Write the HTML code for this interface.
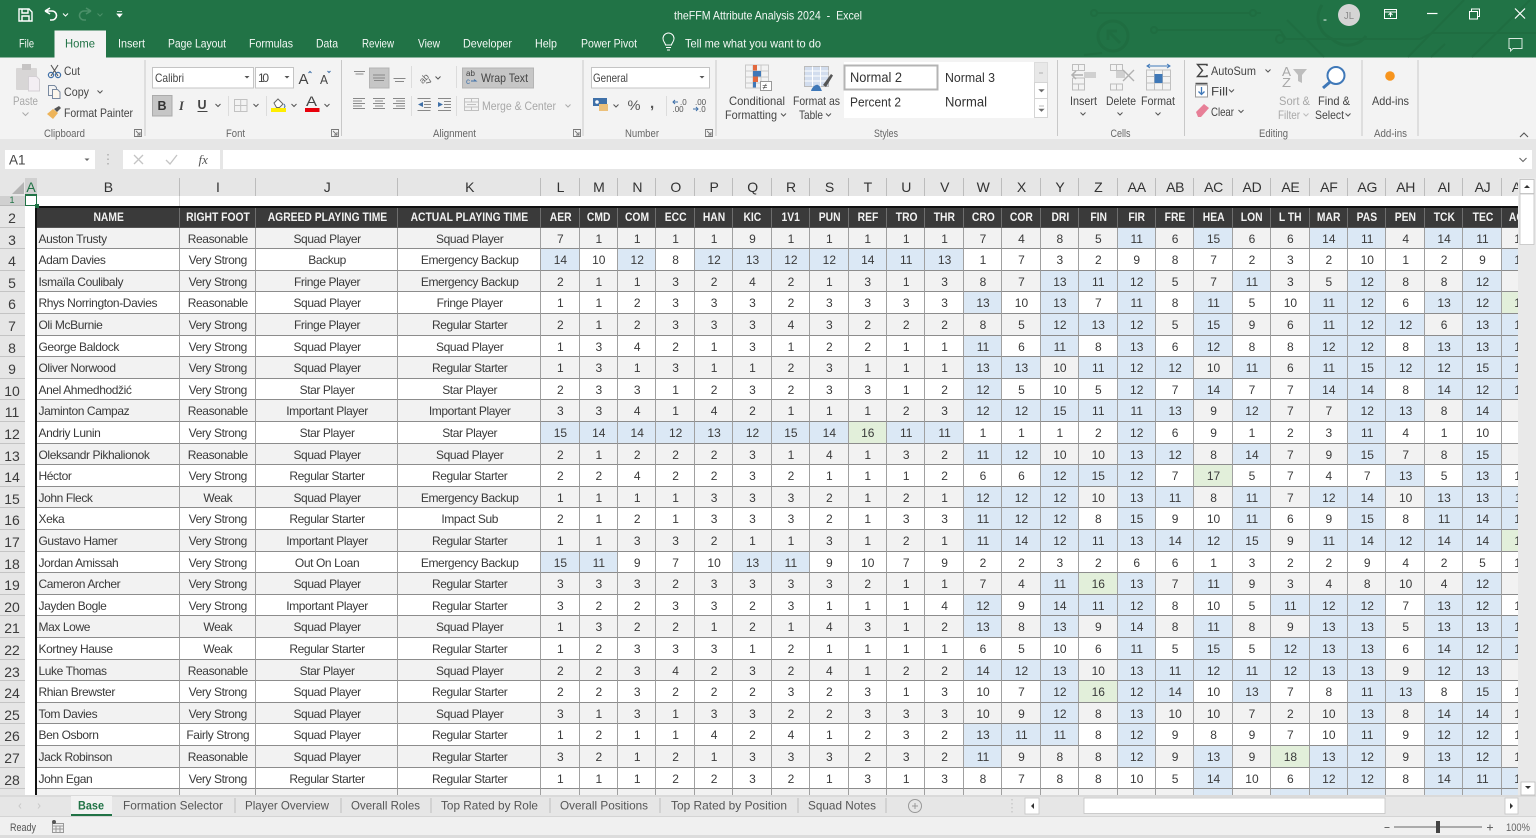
<!DOCTYPE html>
<html lang="en"><head><meta charset="utf-8"><title>theFFM Attribute Analysis 2024 - Excel</title>
<style>
*{box-sizing:border-box}
html,body{margin:0;padding:0;width:1536px;height:838px;overflow:hidden;background:#e6e6e6;font-family:"Liberation Sans",sans-serif}
body{filter:blur(.35px)}
svg#c{position:absolute;left:0;top:0}
svg text{font-family:"Liberation Sans",sans-serif;font-size:12px;fill:#444}
.w{fill:#f4f8f5}.gr{fill:#a8a8a8}.lb{font-size:11px;fill:#666}
#g{position:absolute;left:37px;top:205.7px;width:1480.7px;height:589.3px;overflow:hidden;font-size:12px;color:#3a3a3a}
#g p{margin:0;display:flex;height:21.6px;background:#fff}
#g p:nth-child(even){background:#f2f2f2}
#g p>*{display:block;flex:none;width:38.43px;height:100%;text-align:center;line-height:22px;padding-left:1px;font-style:normal;text-decoration:none;border-right:1px solid #a0a0a0;border-bottom:1px solid #8c8c8c;white-space:nowrap;overflow:hidden}
#g p>:nth-child(1){width:142.6px;text-align:left;padding-left:1.5px;letter-spacing:-.4px}
#g p>:nth-child(2){width:76.4px;letter-spacing:-.4px}
#g p>:nth-child(3){width:142.2px;letter-spacing:-.4px}
#g p>:nth-child(4){width:143px;letter-spacing:-.4px}
#g u{background:#dbe8f5}
#g s{background:#e2efda}
#g p.h{height:22px;background:#3a3a3a;border-top:2px solid #111;color:#f2f2f2;font-weight:bold}
#g p.h>*{line-height:19px;border-right:1px solid #6e6e6e;border-bottom:1px solid #555;letter-spacing:0!important;text-align:center!important;padding-left:1px!important}
#g em{display:inline-block;font-style:normal;transform:scaleX(.86)}
#ch{position:absolute;left:37px;top:178px;width:1481px;height:17.5px;display:flex;overflow:hidden;font-size:14px;color:#333;text-align:center;line-height:18px;letter-spacing:-.3px}
#ch b{font-weight:normal;flex:none;width:38.43px;height:100%;border-right:1px solid #bcbcbc;padding-left:1px}
#ch b:nth-child(1){width:142.6px}#ch b:nth-child(2){width:76.4px}#ch b:nth-child(3){width:142.2px}#ch b:nth-child(4){width:143px}
#rh{position:absolute;left:0;top:195.5px;width:25px;height:599.5px;overflow:hidden;font-size:14px;color:#3c3c3c;text-align:center}
#rh b{display:block;font-weight:normal;height:21.6px;line-height:25px;border-bottom:1px solid #c4c4c4;padding-right:1px}
#rh b.a{height:10.2px;line-height:9px;font-size:9px;color:#217346;background:#d0d0d0;border-bottom:1px solid #bbb}
#rh b.b{height:22px;line-height:24px}
#r1{position:absolute;left:25px;top:195.5px;width:1493px;height:10.5px;background:#fff}
#ca{position:absolute;left:25px;top:206px;width:12px;height:589px;background:#fff}
#tk{position:absolute;left:35.4px;top:205.7px;width:1.8px;height:589.3px;background:#111}
#sel{position:absolute;left:25px;top:195.2px;width:12px;height:11px;border:1.5px solid #217346;background:#fff}
#hd{position:absolute;left:34.5px;top:204px;width:4px;height:4px;background:#217346}
#lin{position:absolute;left:179.2px;top:195.5px;width:1px;height:10.5px;background:#d6d6d6}
</style></head><body>
<svg id="c" width="1536" height="838" viewBox="0 0 1536 838" xmlns="http://www.w3.org/2000/svg">
<rect width="1536" height="57.5" fill="#217346"/>
<rect y="57.5" width="1536" height="81.5" fill="#f3f3f3"/>
<rect y="139" width="1536" height="56" fill="#e6e6e6"/>
<rect y="795" width="1536" height="43" fill="#e6e6e6"/>
<rect y="817" width="1536" height="18" fill="#f0f0f0"/>
<rect y="816" width="1536" height="1" fill="#d4d4d4"/>
<rect y="835" width="1536" height="3" fill="#dcdcdc"/>
<!-- circuit -->
<g fill="none" stroke="#1f6d41" stroke-width="2">
<path d="M1097 13H1250M1256 13l5 0M1157 30H1280l6 9H1420l12-6H1536M1287 20l37 37M1084 55l18-2M1464 0l-56 57M1530 0l-58 57M1445 44l-14 13"/>
<circle cx="1094" cy="13" r="3"/><circle cx="1253" cy="13" r="3"/><circle cx="1154" cy="30" r="3"/><circle cx="1280" cy="39" r="4"/>
<circle cx="1113" cy="36" r="15" stroke-width="3"/><path d="M1120 43l-12-12M1108 40v-9h9" stroke-width="3"/>
<path d="M1322 5a23 23 0 0 0 10 34a23 23 0 0 0 34-3" stroke-width="3"/>
</g>
<!-- QAT -->
<path d="M19 9h10l3 3v9H19zM22 9v4h6V9M22 21v-5h7v5" fill="none" stroke="#fff" stroke-width="1.4"/>
<path d="M45 11l5-3M45 11l5 3M45 11h7a4.5 4.5 0 0 1 0 9h-2" fill="none" stroke="#fff" stroke-width="1.6"/>
<path d="M63 13.5l2.5 2.5 2.5-2.5" fill="none" stroke="#fff"/>
<path d="M91 11l-5-3M91 11l-5 3M91 11h-7a4.5 4.5 0 0 0 0 9h2" fill="none" stroke="#4b9069" stroke-width="1.6"/>
<path d="M97.500 13.500l2.500 2.500 2.500-2.500" fill="none" stroke="#4b9069"/>
<path d="M117 11.500h5M117 14h5l-2.500 3z" fill="#fff" stroke="#fff" stroke-width=".8"/>
<text class="w" x="674" y="19.500" textLength="188" lengthAdjust="spacingAndGlyphs" xml:space="preserve">theFFM Attribute Analysis 2024  -  Excel</text>
<text class="w" x="1323" y="23" font-size="8">-</text>
<circle cx="1349" cy="15" r="11" fill="#d4d4d4"/>
<text x="1344" y="19" textLength="10" lengthAdjust="spacingAndGlyphs" style="font-size:10px;fill:#8a8a8a">JL</text>
<path d="M1384.500 9.500h12v9h-12zM1384.500 12h12M1390.500 17v-4M1388.500 15l2-2 2 2" fill="none" stroke="#fff"/>
<path d="M1427 13.500h10.500" stroke="#fff" stroke-width="1.2"/>
<path d="M1469.500 11.500h8v7.500h-8zM1471.500 11.500v-2.500h8v7.500h-2" fill="none" stroke="#fff"/>
<path d="M1515 8.500l10 10M1525 8.500l-10 10" stroke="#fff" stroke-width="1.2"/>
<path d="M1509 38.500h13v10h-9l-2.500 2.500v-2.500H1509z" fill="none" stroke="#d8e8de"/>
<!-- tabs -->
<rect x="54.500" y="30.500" width="51.500" height="27.500" fill="#f3f3f3"/>
<g>
<text class="w" x="19" y="47.500" textLength="15" lengthAdjust="spacingAndGlyphs">File</text>
<text x="65" y="47.500" textLength="30" lengthAdjust="spacingAndGlyphs" style="fill:#217346">Home</text>
<text class="w" x="118" y="47.500" textLength="27" lengthAdjust="spacingAndGlyphs">Insert</text>
<text class="w" x="168" y="47.500" textLength="58" lengthAdjust="spacingAndGlyphs">Page Layout</text>
<text class="w" x="249" y="47.500" textLength="44" lengthAdjust="spacingAndGlyphs">Formulas</text>
<text class="w" x="316" y="47.500" textLength="22" lengthAdjust="spacingAndGlyphs">Data</text>
<text class="w" x="362" y="47.500" textLength="32" lengthAdjust="spacingAndGlyphs">Review</text>
<text class="w" x="418" y="47.500" textLength="22" lengthAdjust="spacingAndGlyphs">View</text>
<text class="w" x="463" y="47.500" textLength="49" lengthAdjust="spacingAndGlyphs">Developer</text>
<text class="w" x="535" y="47.500" textLength="22" lengthAdjust="spacingAndGlyphs">Help</text>
<text class="w" x="581" y="47.500" textLength="56" lengthAdjust="spacingAndGlyphs">Power Pivot</text>
<text class="w" x="685" y="47.500" textLength="136" lengthAdjust="spacingAndGlyphs">Tell me what you want to do</text>
</g>
<path d="M665.500 45c0-2-2.500-3-2.500-6.500a5.500 5.500 0 0 1 11 0c0 3.500-2.500 4.500-2.500 6.500zM666 47.500h5M667 50h3" fill="none" stroke="#fff"/>
<!-- ribbon separators -->
<path d="M145 60v76M341.500 60v76M583 60v76M716 60v76M1057.500 60v76M1184.500 60v76M1362 60v76M1418 60v76" stroke="#c8c8c8"/>
<g class="labels">
<text class="lb" x="44" y="137" textLength="41" lengthAdjust="spacingAndGlyphs">Clipboard</text>
<text class="lb" x="226" y="137" textLength="19" lengthAdjust="spacingAndGlyphs">Font</text>
<text class="lb" x="433" y="137" textLength="43" lengthAdjust="spacingAndGlyphs">Alignment</text>
<text class="lb" x="625" y="137" textLength="34" lengthAdjust="spacingAndGlyphs">Number</text>
<text class="lb" x="874" y="137" textLength="24" lengthAdjust="spacingAndGlyphs">Styles</text>
<text class="lb" x="1110.500" y="137" textLength="20" lengthAdjust="spacingAndGlyphs">Cells</text>
<text class="lb" x="1259" y="137" textLength="29" lengthAdjust="spacingAndGlyphs">Editing</text>
<text class="lb" x="1374" y="137" textLength="33" lengthAdjust="spacingAndGlyphs">Add-ins</text>
</g>
<path d="M134.500 129.500h7v7h-7zM136 131l4 4M137 135h3v-3M331.500 129.500h7v7h-7zM333 131l4 4M334 135h3v-3M573.500 129.500h7v7h-7zM575 131l4 4M576 135h3v-3M705.500 129.500h7v7h-7zM707 131l4 4M708 135h3v-3" fill="none" stroke="#777" stroke-width=".9"/>
<!-- clipboard -->
<rect x="16" y="68" width="21" height="22" rx="1" fill="#d8d6d6"/><rect x="22" y="64" width="9" height="6" fill="#c6c4c4"/>
<path d="M28.500 76.500h8l3 3v11.500h-11z" fill="#f3eef3" stroke="#d4d0d4"/>
<text class="gr" x="13" y="105" textLength="25" lengthAdjust="spacingAndGlyphs">Paste</text>
<path d="M22.500 112.500l3 3 3-3" fill="none" stroke="#aaa"/>
<path d="M51 65l7 11M58 65l-7 11" stroke="#555" stroke-width="1.100"/><circle cx="51" cy="75" r="2.600" fill="none" stroke="#3f70a8" stroke-width="1.200"/><circle cx="58" cy="75" r="2.600" fill="none" stroke="#3f70a8" stroke-width="1.200"/>
<text x="64" y="75" textLength="16" lengthAdjust="spacingAndGlyphs">Cut</text>
<path d="M48.500 85.500h6l2 2v8h-8z" fill="#f4f4f4" stroke="#7a8aa0"/><path d="M52.500 89.500h5l2.500 2.500v6.500h-7.500z" fill="#fdf7ec" stroke="#7a8aa0"/>
<text x="64" y="96" textLength="25" lengthAdjust="spacingAndGlyphs">Copy</text>
<path d="M97.500 90.500l2.500 2.500 2.500-2.500" fill="none" stroke="#555"/>
<path d="M47 114l6-5 5 4-5 6z" fill="#edb45a"/><path d="M54 109l5-3 2 2-4 4z" fill="#555"/>
<text x="64" y="117" textLength="69" lengthAdjust="spacingAndGlyphs">Format Painter</text>
<!-- font -->
<rect x="152.500" y="67.500" width="101" height="20.500" fill="#fff" stroke="#c4c4c4"/>
<text x="155" y="82" textLength="29" lengthAdjust="spacingAndGlyphs">Calibri</text>
<path d="M244.500 76h5l-2.500 2.500z" fill="#555"/>
<rect x="255.500" y="67.500" width="38" height="20.500" fill="#fff" stroke="#c4c4c4"/>
<text x="258" y="82" textLength="11">10</text>
<path d="M284.500 76h5l-2.500 2.500z" fill="#555"/>
<text x="298.500" y="84" style="font-size:15px" textLength="10" lengthAdjust="spacingAndGlyphs">A</text><path d="M308.500 73l1.500-1.500 1.500 1.500" fill="none" stroke="#3f70a8"/>
<text x="320" y="84" style="font-size:13px" textLength="8" lengthAdjust="spacingAndGlyphs">A</text><path d="M327.500 71l1.500 1.500 1.500-1.500" fill="none" stroke="#3f70a8"/>
<rect x="152.500" y="95.500" width="19.500" height="20.500" fill="#c6c6c6" stroke="#ababab"/>
<text x="157.500" y="110" style="font-size:12.500px;font-weight:bold;fill:#333">B</text>
<text x="179" y="110" style="font-size:12.500px;font-style:italic;font-weight:bold;fill:#444;font-family:'Liberation Serif',serif">I</text>
<text x="197.500" y="109" style="font-size:12.500px;font-weight:bold;fill:#444">U</text><path d="M197.500 111.500h10" stroke="#444"/>
<path d="M215.500 104l2.500 2.500 2.500-2.500M253.500 104l2.500 2.500 2.500-2.500M291.500 104l2.500 2.500 2.500-2.500M324.500 104l2.500 2.500 2.500-2.500" fill="none" stroke="#555"/>
<path d="M234.500 99.500h12.500v12h-12.500zM240.700 99.500v12M234.500 105.500h12.500" fill="none" stroke="#c2c2c2"/>
<path d="M228.500 96v20" stroke="#dcdcdc"/><path d="M266.500 96v20" stroke="#dcdcdc"/>
<rect x="271" y="108" width="15" height="4" fill="#ffee00"/>
<path d="M274 103l4-4 5 5-3.500 3.500h-3z" fill="#fff" stroke="#666"/><path d="M284 104c1 1.500 1.500 3 0 3.500" fill="none" stroke="#3f70a8"/>
<rect x="305" y="108" width="14.500" height="4" fill="#e8000b"/>
<text x="306" y="106" style="font-size:13.500px;fill:#444" textLength="11" lengthAdjust="spacingAndGlyphs">A</text>
<!-- alignment -->
<rect x="369.500" y="68" width="19.500" height="20" fill="#c6c6c6" stroke="#b4b4b4"/>
<path d="M354 71.500h11M355.500 74h8M373 75h12M373 78h12M374 80.500h10M393.500 78.500h12M395 81.500h9" stroke="#888"/>
<path d="M353 98.500h12M353 101h9M353 103.500h12M353 106h9M353 108.500h12M373 98.500h12M375 101h8M373 103.500h12M375 106h8M373 108.500h12M393 98.500h12M396 101h9M393 103.500h12M396 106h9M393 108.500h12M417.500 98.500h13M424 101.500h7M424 104.500h7M424 107.500h7M417.500 110.500h13M438 98.500h13M444 101.500h7M444 104.500h7M444 107.500h7M438 110.500h13" stroke="#888"/>
<path d="M423 102l-5 2.500 5 2.500zM438 102l5 2.500-5 2.500z" fill="#3f70a8"/>
<path d="M411.500 66v22M411.500 96v20M456.500 66v22M456.500 96v20" stroke="#dcdcdc"/>
<text transform="rotate(-45 424 80)" x="420" y="82" style="font-size:9px;fill:#666">ab</text>
<path d="M426 83l5-1M431 82l-2-3" fill="none" stroke="#777"/>
<path d="M435.500 76.500l2.500 2.500 2.500-2.500" fill="none" stroke="#555"/>
<rect x="462.500" y="68" width="71" height="20" fill="#c6c6c6" stroke="#b4b4b4"/>
<text x="466" y="76" style="font-size:8px">ab</text><text x="466" y="84" style="font-size:8px;fill:#3f70a8">c</text><path d="M471 81h5l-2-1.500" fill="none" stroke="#3f70a8"/>
<text x="481" y="82" textLength="47" lengthAdjust="spacingAndGlyphs">Wrap Text</text>
<path d="M464.500 98.500h14v12h-14zM464.500 102h14M464.500 107h14M471.500 98.500v3.500M471.500 107v3.500M467 104.500h9" fill="none" stroke="#c0c0c0"/>
<text class="gr" x="482" y="110" textLength="74" lengthAdjust="spacingAndGlyphs">Merge &amp; Center</text>
<path d="M565.500 104.500l2.500 2.500 2.500-2.500" fill="none" stroke="#aaa"/>
<!-- number -->
<rect x="591.500" y="67.500" width="118" height="20.500" fill="#fff" stroke="#c4c4c4"/>
<text x="593" y="82" textLength="35" lengthAdjust="spacingAndGlyphs">General</text>
<path d="M699.500 76h5l-2.500 2.500z" fill="#555"/>
<rect x="593" y="98" width="14" height="8" fill="#3f70a8"/><rect x="599" y="104" width="9" height="7" fill="#ecc07a"/><circle cx="597" cy="102" r="1.800" fill="#fff"/>
<path d="M613.500 104.500l2.500 2.500 2.500-2.500" fill="none" stroke="#555"/>
<text x="627.500" y="110" style="font-size:14px;fill:#555" textLength="13" lengthAdjust="spacingAndGlyphs">%</text>
<text x="650" y="108" style="font-size:15px;font-weight:bold;fill:#555">,</text>
<path d="M666.500 96v20" stroke="#dcdcdc"/>
<text x="680" y="105" style="font-size:8px;fill:#555">.0</text><text x="672.500" y="112" style="font-size:8px;fill:#555">.00</text><path d="M678 102h-5M675 100l-2 2 2 2" fill="none" stroke="#3f70a8"/>
<text x="695" y="105" style="font-size:8px;fill:#555">.00</text><text x="699" y="112" style="font-size:8px;fill:#555">.0</text><path d="M693 109h5M696 107l2 2-2 2" fill="none" stroke="#3f70a8"/>
<!-- styles -->
<path d="M745.500 65h23v23h-23zM745.500 71h23M745.500 77h23M745.500 83h23M753 65v23M761 65v23" fill="none" stroke="#c8c8c8"/>
<rect x="753" y="65" width="4" height="5.500" fill="#e2683d"/><rect x="753" y="71" width="8" height="5.500" fill="#3f78b8"/><rect x="753" y="76.500" width="5" height="5.500" fill="#e2683d"/><rect x="753" y="82" width="3" height="5.500" fill="#3f78b8"/>
<rect x="760.500" y="81.500" width="11" height="9" fill="#fff" stroke="#999"/>
<text x="762.500" y="89.500" style="font-size:9px">≠</text>
<text x="729" y="105" textLength="56" lengthAdjust="spacingAndGlyphs">Conditional</text>
<text x="725" y="119" textLength="52" lengthAdjust="spacingAndGlyphs">Formatting</text>
<path d="M781 113.500l2.500 2.500 2.500-2.500" fill="none" stroke="#555"/>
<rect x="804.500" y="66.500" width="24" height="20" fill="#d2ddee" stroke="#bbb"/><path d="M804.500 71h24M804.500 76h24M804.500 81h24M812.500 66.500v20M820.500 66.500v20" stroke="#fff"/>
<path d="M823 85l8-11 2 1.500-7 11.500z" fill="#555"/><path d="M811 91c1-4 5-7 7-6s3 4 4 6z" fill="#3f78b8"/>
<text x="793" y="105" textLength="47" lengthAdjust="spacingAndGlyphs">Format as</text>
<text x="799" y="119" textLength="24" lengthAdjust="spacingAndGlyphs">Table</text>
<path d="M826 113.500l2.500 2.500 2.500-2.500" fill="none" stroke="#555"/>
<rect x="844" y="62" width="191" height="56" fill="#fff"/>
<rect x="844.500" y="65.500" width="93" height="24" fill="#fff" stroke="#b4b4b4" stroke-width="2"/>
<text x="850" y="82" style="font-size:14px;fill:#333" textLength="52" lengthAdjust="spacingAndGlyphs">Normal 2</text>
<text x="945" y="82" style="fill:#333;font-size:12.500px" textLength="50" lengthAdjust="spacingAndGlyphs">Normal 3</text>
<text x="850" y="106.500" style="fill:#333;font-size:12.500px" textLength="51" lengthAdjust="spacingAndGlyphs">Percent 2</text>
<text x="945" y="106.500" style="fill:#333;font-size:14px" textLength="42" lengthAdjust="spacingAndGlyphs">Normal</text>
<rect x="1034.500" y="62.500" width="13" height="20" fill="#e8e8e8" stroke="#dcdcdc"/><rect x="1034.500" y="82.500" width="13" height="16" fill="#fff" stroke="#d4d4d4"/><rect x="1034.500" y="98.500" width="13" height="19" fill="#fff" stroke="#d4d4d4"/>
<path d="M1039 73h4M1039 89.500h5l-2.500 2.500zM1039 106h5M1039 109h5l-2.500 2.500z" fill="#666" stroke="#777" stroke-width=".6"/>
<!-- cells -->
<path d="M1072.500 64.500h12v6h-12zM1078.500 64.500v6M1072.500 84h12v6h-12zM1078.500 84v6M1072.500 78h12M1072.500 84v-6M1084.500 84v-6" fill="none" stroke="#bdbdbd"/>
<rect x="1084" y="72" width="12" height="6" fill="#d0d0d0"/><path d="M1083 75h-11M1076 71l-4 4 4 4" fill="none" stroke="#b0b0b0" stroke-width="1.500"/>
<text x="1070" y="105" textLength="27" lengthAdjust="spacingAndGlyphs">Insert</text>
<path d="M1110.500 64.500h12v6h-12zM1116.500 64.500v6M1110.500 84h12v6h-12zM1116.500 84v6" fill="none" stroke="#bdbdbd"/>
<rect x="1116" y="71" width="9" height="7" fill="#d0d0d0"/><path d="M1123 70l11 11M1134 70l-11 11" stroke="#b0b0b0" stroke-width="1.400"/>
<text x="1106" y="105" textLength="30" lengthAdjust="spacingAndGlyphs">Delete</text>
<path d="M1146.500 70h24v20h-24zM1154.500 70v20M1162.500 70v20M1146.500 76.500h24M1146.500 83h24" fill="none" stroke="#c0c0c0"/><rect x="1154.500" y="74" width="8" height="9" fill="#3f78b8"/>
<path d="M1147 66h23M1150 64l-3 2 3 2M1167 64l3 2-3 2" fill="none" stroke="#3f78b8"/>
<text x="1141" y="105" textLength="34" lengthAdjust="spacingAndGlyphs">Format</text>
<path d="M1080.500 112.500l2.500 2.500 2.500-2.500M1117.500 112.500l2.500 2.500 2.500-2.500M1155.500 112.500l2.500 2.500 2.500-2.500" fill="none" stroke="#555"/>
<!-- editing -->
<path d="M1207 66v-1.500h-9.500l5 6-5 6h9.500V75" fill="none" stroke="#444" stroke-width="1.400"/>
<text x="1211" y="75" textLength="45" lengthAdjust="spacingAndGlyphs">AutoSum</text>
<path d="M1265.500 69.500l2.500 2.500 2.500-2.500" fill="none" stroke="#555"/>
<rect x="1195.500" y="85" width="12" height="12" fill="#fff" stroke="#999"/><path d="M1195.500 83.500h12" stroke="#555" stroke-width="1.500"/><path d="M1201.500 87v7M1198.500 91.500l3 3 3-3" fill="none" stroke="#3f78b8" stroke-width="1.300"/>
<text x="1211" y="95.500" textLength="17" lengthAdjust="spacingAndGlyphs">Fill</text>
<path d="M1229 89.500l2.500 2.500 2.500-2.500" fill="none" stroke="#555"/>
<path d="M1196 112l8-8 5 4-8 9h-3z" fill="#e77f97"/>
<text x="1211" y="116" textLength="23" lengthAdjust="spacingAndGlyphs">Clear</text>
<path d="M1238.500 110l2.500 2.500 2.500-2.500" fill="none" stroke="#555"/>
<text class="gr" x="1282" y="76" style="font-size:13px" textLength="9" lengthAdjust="spacingAndGlyphs">A</text>
<text class="gr" x="1282" y="87" style="font-size:13px" textLength="9" lengthAdjust="spacingAndGlyphs">Z</text>
<path d="M1293 69h14l-5 6v8l-4-2v-6z" fill="#bdbdbd"/>
<text class="gr" x="1279" y="105" textLength="31" lengthAdjust="spacingAndGlyphs">Sort &amp;</text>
<text class="gr" x="1278" y="119" textLength="22" lengthAdjust="spacingAndGlyphs">Filter</text>
<path d="M1303.500 113.500l2.500 2.500 2.500-2.500" fill="none" stroke="#bbb"/>
<circle cx="1336" cy="75.500" r="8.500" fill="#fff" stroke="#3f78b8" stroke-width="2"/><path d="M1330 82l-7 6" stroke="#3f78b8" stroke-width="3"/>
<text x="1318" y="105" textLength="32" lengthAdjust="spacingAndGlyphs">Find &amp;</text>
<text x="1315" y="119" textLength="29" lengthAdjust="spacingAndGlyphs">Select</text>
<path d="M1345.500 113.500l2.500 2.500 2.500-2.500" fill="none" stroke="#555"/>
<circle cx="1390" cy="76" r="4.800" fill="#f7941d"/>
<text x="1372" y="105" textLength="37" lengthAdjust="spacingAndGlyphs">Add-ins</text>
<path d="M1520 137l4-4 4 4" fill="none" stroke="#555" stroke-width="1.100"/>
<!-- formula bar -->
<rect x="5" y="150" width="90" height="19" fill="#fff"/>
<text x="9" y="164.500" style="font-size:13.500px;fill:#444">A1</text>
<path d="M84.500 158.500h5l-2.500 2.500z" fill="#666"/>
<path d="M108 154v1.500M108 158.500v1.500M108 163v1.500" stroke="#aaa" stroke-width="1.400"/>
<rect x="123" y="150" width="97" height="19" fill="#fff"/>
<path d="M134 155l9 9M143 155l-9 9" stroke="#c4c4c4" stroke-width="1.300"/>
<path d="M166 160l4 4 7-9" fill="none" stroke="#c4c4c4" stroke-width="1.300"/>
<text x="198.500" y="164" style="font-size:13px;font-style:italic;fill:#555;font-family:'Liberation Serif',serif">fx</text>
<rect x="223" y="150" width="1309" height="19" fill="#fff"/>
<path d="M1519.500 158l3.500 3.500 3.500-3.500" fill="none" stroke="#666" stroke-width="1.100"/>
<!-- corner -->
<path d="M24 182v12H12z" fill="#b4b4b4"/>
<!-- vertical scrollbar -->
<rect x="1518" y="178" width="18" height="618" fill="#e9e9e9"/>
<rect x="1520" y="179.500" width="14" height="14" fill="#fff" stroke="#bbb" stroke-width=".8"/><path d="M1524 188h6l-3-3z" fill="#333"/>
<rect x="1520" y="194" width="14" height="50.500" fill="#fff" stroke="#c4c4c4" stroke-width=".8"/>
<rect x="1521" y="782" width="14" height="13" fill="#fff" stroke="#bbb" stroke-width=".8"/><path d="M1525 786h6l-3 3z" fill="#333"/>
<!-- sheet tabs -->
<rect y="795.500" width="1536" height="1" fill="#cfcfcf"/>
<rect x="71" y="796" width="41" height="20" fill="#f2f2f2"/><rect x="71" y="814" width="41" height="2" fill="#217346"/>
<path d="M21 803.500l-2 2.500 2 2.500M38 803.500l2 2.500-2 2.500" fill="none" stroke="#c8c8c8"/>
<text x="78" y="809.500" textLength="26" lengthAdjust="spacingAndGlyphs" style="font-weight:bold;fill:#217346">Base</text>
<g>
<text x="123" y="809.500" textLength="100" lengthAdjust="spacingAndGlyphs" style="fill:#555">Formation Selector</text>
<text x="245" y="809.500" textLength="84" lengthAdjust="spacingAndGlyphs" style="fill:#555">Player Overview</text>
<text x="351" y="809.500" textLength="69" lengthAdjust="spacingAndGlyphs" style="fill:#555">Overall Roles</text>
<text x="441" y="809.500" textLength="97" lengthAdjust="spacingAndGlyphs" style="fill:#555">Top Rated by Role</text>
<text x="560" y="809.500" textLength="88" lengthAdjust="spacingAndGlyphs" style="fill:#555">Overall Positions</text>
<text x="671" y="809.500" textLength="116" lengthAdjust="spacingAndGlyphs" style="fill:#555">Top Rated by Position</text>
<text x="808" y="809.500" textLength="68" lengthAdjust="spacingAndGlyphs" style="fill:#555">Squad Notes</text>
</g>
<path d="M235 798v15M341 798v15M431 798v15M550 798v15M660 798v15M798 798v15M886 798v15" stroke="#bdbdbd"/>
<circle cx="915" cy="806" r="6.500" fill="none" stroke="#999"/><path d="M912 806h6M915 803v6" stroke="#999"/>
<path d="M1012 799v1.500M1012 803v1.500M1012 807v1.500M1012 811v1.500" stroke="#bbb"/>
<rect x="1025" y="798" width="14" height="16" fill="#fff" stroke="#c4c4c4" stroke-width=".8"/><path d="M1034 803v6l-3-3z" fill="#333"/>
<rect x="1084" y="798" width="301" height="15.500" fill="#fff" stroke="#c4c4c4" stroke-width=".8"/>
<rect x="1505" y="798" width="13" height="16" fill="#fff" stroke="#c4c4c4" stroke-width=".8"/><path d="M1510 803v6l3-3z" fill="#333"/>
<!-- status -->
<text x="10" y="831" textLength="26" lengthAdjust="spacingAndGlyphs" style="font-size:11px;fill:#555">Ready</text>
<path d="M52.500 823.500h11v9h-11zM52.500 826h11M56 826v6.500M60 826v6.500M52.500 829h11" fill="none" stroke="#999"/><circle cx="54" cy="822" r="2" fill="#555"/>
<path d="M1384.500 827.500h5M1394 827h88M1487 827.500h6M1490 824.500v6" stroke="#666"/>
<rect x="1436" y="821" width="4" height="12" fill="#444"/>
<text x="1506" y="831" textLength="24" lengthAdjust="spacingAndGlyphs" style="font-size:11px;fill:#666">100%</text>
</svg>
<div id="r1"></div><div id="ca"></div><div id="lin"></div>
<div id="ch"><b>B</b><b>I</b><b>J</b><b>K</b><b>L</b><b>M</b><b>N</b><b>O</b><b>P</b><b>Q</b><b>R</b><b>S</b><b>T</b><b>U</b><b>V</b><b>W</b><b>X</b><b>Y</b><b>Z</b><b>AA</b><b>AB</b><b>AC</b><b>AD</b><b>AE</b><b>AF</b><b>AG</b><b>AH</b><b>AI</b><b>AJ</b><b>AK</b></div>
<div style="position:absolute;left:25px;top:178px;width:12px;height:17.500px;background:#d0d0d0;color:#217346;font-size:14px;text-align:center;line-height:18px;border-bottom:2px solid #217346">A</div>
<div id="rh"><b class="a">1</b><b class="b">2</b><b>3</b><b>4</b><b>5</b><b>6</b><b>7</b><b>8</b><b>9</b><b>10</b><b>11</b><b>12</b><b>13</b><b>14</b><b>15</b><b>16</b><b>17</b><b>18</b><b>19</b><b>20</b><b>21</b><b>22</b><b>23</b><b>24</b><b>25</b><b>26</b><b>27</b><b>28</b><b></b></div>
<div id="g">
<p class="h"><i><em>NAME</em></i><i><em>RIGHT FOOT</em></i><i><em>AGREED PLAYING TIME</em></i><i><em>ACTUAL PLAYING TIME</em></i><i><em>AER</em></i><i><em>CMD</em></i><i><em>COM</em></i><i><em>ECC</em></i><i><em>HAN</em></i><i><em>KIC</em></i><i><em>1V1</em></i><i><em>PUN</em></i><i><em>REF</em></i><i><em>TRO</em></i><i><em>THR</em></i><i><em>CRO</em></i><i><em>COR</em></i><i><em>DRI</em></i><i><em>FIN</em></i><i><em>FIR</em></i><i><em>FRE</em></i><i><em>HEA</em></i><i><em>LON</em></i><i><em>L TH</em></i><i><em>MAR</em></i><i><em>PAS</em></i><i><em>PEN</em></i><i><em>TCK</em></i><i><em>TEC</em></i><i><em>AGG</em></i></p>
<p><i>Auston Trusty</i><i>Reasonable</i><i>Squad Player</i><i>Squad Player</i><i>7</i><i>1</i><i>1</i><i>1</i><i>1</i><i>9</i><i>1</i><i>1</i><i>1</i><i>1</i><i>1</i><i>7</i><i>4</i><i>8</i><i>5</i><u>11</u><i>6</i><u>15</u><i>6</i><i>6</i><u>14</u><u>11</u><i>4</i><u>14</u><u>11</u><i>10</i></p>
<p><i>Adam Davies</i><i>Very Strong</i><i>Backup</i><i>Emergency Backup</i><u>14</u><i>10</i><u>12</u><i>8</i><u>12</u><u>13</u><u>12</u><u>12</u><u>14</u><u>11</u><u>13</u><i>1</i><i>7</i><i>3</i><i>2</i><i>9</i><i>8</i><i>7</i><i>2</i><i>3</i><i>2</i><i>10</i><i>1</i><i>2</i><i>9</i><u>12</u></p>
<p><i>Ismaïla Coulibaly</i><i>Very Strong</i><i>Fringe Player</i><i>Emergency Backup</i><i>2</i><i>1</i><i>1</i><i>3</i><i>2</i><i>4</i><i>2</i><i>1</i><i>3</i><i>1</i><i>3</i><i>8</i><i>7</i><u>13</u><u>11</u><u>12</u><i>5</i><i>7</i><u>11</u><i>3</i><i>5</i><u>12</u><i>8</i><i>8</i><u>12</u><i></i></p>
<p><i>Rhys Norrington-Davies</i><i>Reasonable</i><i>Squad Player</i><i>Fringe Player</i><i>1</i><i>1</i><i>2</i><i>3</i><i>3</i><i>3</i><i>2</i><i>3</i><i>3</i><i>3</i><i>3</i><u>13</u><i>10</i><u>13</u><i>7</i><u>11</u><i>8</i><u>11</u><i>5</i><i>10</i><u>11</u><u>12</u><i>6</i><u>13</u><u>12</u><s>16</s></p>
<p><i>Oli McBurnie</i><i>Very Strong</i><i>Fringe Player</i><i>Regular Starter</i><i>2</i><i>1</i><i>2</i><i>3</i><i>3</i><i>3</i><i>4</i><i>3</i><i>2</i><i>2</i><i>2</i><i>8</i><i>5</i><u>12</u><u>13</u><u>12</u><i>5</i><u>15</u><i>9</i><i>6</i><u>11</u><u>12</u><u>12</u><i>6</i><u>13</u><u>12</u></p>
<p><i>George Baldock</i><i>Very Strong</i><i>Squad Player</i><i>Squad Player</i><i>1</i><i>3</i><i>4</i><i>2</i><i>1</i><i>3</i><i>1</i><i>2</i><i>2</i><i>1</i><i>1</i><u>11</u><i>6</i><u>11</u><i>8</i><u>13</u><i>6</i><u>12</u><i>8</i><i>8</i><u>12</u><u>12</u><i>8</i><u>13</u><u>13</u><u>12</u></p>
<p><i>Oliver Norwood</i><i>Very Strong</i><i>Squad Player</i><i>Regular Starter</i><i>1</i><i>3</i><i>1</i><i>3</i><i>1</i><i>1</i><i>2</i><i>3</i><i>1</i><i>1</i><i>1</i><u>13</u><u>13</u><i>10</i><u>11</u><u>12</u><u>12</u><i>10</i><u>11</u><i>6</i><u>11</u><u>15</u><u>12</u><u>12</u><u>15</u><u>12</u></p>
<p><i>Anel Ahmedhodžić</i><i>Very Strong</i><i>Star Player</i><i>Star Player</i><i>2</i><i>3</i><i>3</i><i>1</i><i>2</i><i>3</i><i>2</i><i>3</i><i>3</i><i>1</i><i>2</i><u>12</u><i>5</i><i>10</i><i>5</i><u>12</u><i>7</i><u>14</u><i>7</i><i>7</i><u>14</u><u>14</u><i>8</i><u>14</u><u>12</u><u>12</u></p>
<p><i>Jaminton Campaz</i><i>Reasonable</i><i>Important Player</i><i>Important Player</i><i>3</i><i>3</i><i>4</i><i>1</i><i>4</i><i>2</i><i>1</i><i>1</i><i>1</i><i>2</i><i>3</i><u>12</u><u>12</u><u>15</u><u>11</u><u>11</u><u>13</u><i>9</i><u>12</u><i>7</i><i>7</i><u>12</u><u>13</u><i>8</i><u>14</u><i></i></p>
<p><i>Andriy Lunin</i><i>Very Strong</i><i>Star Player</i><i>Star Player</i><u>15</u><u>14</u><u>14</u><u>12</u><u>13</u><u>12</u><u>15</u><u>14</u><s>16</s><u>11</u><u>11</u><i>1</i><i>1</i><i>1</i><i>2</i><u>12</u><i>6</i><i>9</i><i>1</i><i>2</i><i>3</i><u>11</u><i>4</i><i>1</i><i>10</i><i></i></p>
<p><i>Oleksandr Pikhalionok</i><i>Reasonable</i><i>Squad Player</i><i>Squad Player</i><i>2</i><i>1</i><i>2</i><i>2</i><i>2</i><i>3</i><i>1</i><i>4</i><i>1</i><i>3</i><i>2</i><u>11</u><u>12</u><i>10</i><i>10</i><u>13</u><u>12</u><i>8</i><u>14</u><i>7</i><i>9</i><u>15</u><i>7</i><i>8</i><u>15</u><i></i></p>
<p><i>Héctor</i><i>Very Strong</i><i>Regular Starter</i><i>Regular Starter</i><i>2</i><i>2</i><i>4</i><i>2</i><i>2</i><i>3</i><i>2</i><i>1</i><i>1</i><i>1</i><i>2</i><i>6</i><i>6</i><u>12</u><u>15</u><u>12</u><i>7</i><s>17</s><i>5</i><i>7</i><i>4</i><i>7</i><u>13</u><i>5</i><u>13</u><i>10</i></p>
<p><i>John Fleck</i><i>Weak</i><i>Squad Player</i><i>Emergency Backup</i><i>1</i><i>1</i><i>1</i><i>1</i><i>3</i><i>3</i><i>3</i><i>2</i><i>1</i><i>2</i><i>1</i><u>12</u><u>12</u><u>12</u><i>10</i><u>13</u><u>11</u><i>8</i><u>11</u><i>7</i><u>12</u><u>14</u><i>10</i><u>13</u><u>13</u><u>11</u></p>
<p><i>Xeka</i><i>Very Strong</i><i>Regular Starter</i><i>Impact Sub</i><i>2</i><i>1</i><i>2</i><i>1</i><i>3</i><i>3</i><i>3</i><i>2</i><i>1</i><i>3</i><i>3</i><u>11</u><u>12</u><u>12</u><i>8</i><u>15</u><i>9</i><i>10</i><u>11</u><i>6</i><i>9</i><u>15</u><i>8</i><u>11</u><u>14</u><u>12</u></p>
<p><i>Gustavo Hamer</i><i>Very Strong</i><i>Important Player</i><i>Regular Starter</i><i>1</i><i>1</i><i>3</i><i>3</i><i>2</i><i>1</i><i>1</i><i>3</i><i>1</i><i>2</i><i>1</i><u>11</u><u>14</u><u>12</u><u>11</u><u>13</u><u>14</u><u>12</u><u>15</u><i>9</i><u>11</u><u>14</u><u>12</u><u>14</u><u>14</u><s>16</s></p>
<p><i>Jordan Amissah</i><i>Very Strong</i><i>Out On Loan</i><i>Emergency Backup</i><u>15</u><u>11</u><i>9</i><i>7</i><i>10</i><u>13</u><u>11</u><i>9</i><i>10</i><i>7</i><i>9</i><i>2</i><i>2</i><i>3</i><i>2</i><i>6</i><i>6</i><i>1</i><i>3</i><i>2</i><i>2</i><i>9</i><i>4</i><i>2</i><i>5</i><i>10</i></p>
<p><i>Cameron Archer</i><i>Very Strong</i><i>Squad Player</i><i>Regular Starter</i><i>3</i><i>3</i><i>3</i><i>2</i><i>3</i><i>3</i><i>3</i><i>3</i><i>2</i><i>1</i><i>1</i><i>7</i><i>4</i><u>11</u><s>16</s><u>13</u><i>7</i><u>11</u><i>9</i><i>3</i><i>4</i><i>8</i><i>10</i><i>4</i><u>12</u><i></i></p>
<p><i>Jayden Bogle</i><i>Very Strong</i><i>Important Player</i><i>Regular Starter</i><i>3</i><i>2</i><i>2</i><i>3</i><i>3</i><i>2</i><i>3</i><i>1</i><i>1</i><i>1</i><i>4</i><u>12</u><i>9</i><u>14</u><u>11</u><u>12</u><i>8</i><i>10</i><i>5</i><u>11</u><u>12</u><u>12</u><i>7</i><u>13</u><u>12</u><i>10</i></p>
<p><i>Max Lowe</i><i>Weak</i><i>Squad Player</i><i>Squad Player</i><i>1</i><i>3</i><i>2</i><i>2</i><i>1</i><i>2</i><i>1</i><i>4</i><i>3</i><i>1</i><i>2</i><u>13</u><i>8</i><u>13</u><i>9</i><u>14</u><i>8</i><u>11</u><i>8</i><i>9</i><u>13</u><u>13</u><i>5</i><u>13</u><u>13</u><u>12</u></p>
<p><i>Kortney Hause</i><i>Weak</i><i>Regular Starter</i><i>Regular Starter</i><i>1</i><i>2</i><i>3</i><i>3</i><i>3</i><i>1</i><i>2</i><i>1</i><i>1</i><i>1</i><i>1</i><i>6</i><i>5</i><i>10</i><i>6</i><u>11</u><i>5</i><u>15</u><i>5</i><u>12</u><u>13</u><u>13</u><i>6</i><u>14</u><u>12</u><u>12</u></p>
<p><i>Luke Thomas</i><i>Reasonable</i><i>Star Player</i><i>Squad Player</i><i>2</i><i>2</i><i>3</i><i>4</i><i>2</i><i>3</i><i>2</i><i>4</i><i>1</i><i>2</i><i>2</i><u>14</u><u>12</u><u>13</u><i>10</i><u>13</u><u>11</u><u>12</u><u>11</u><u>12</u><u>13</u><u>13</u><i>9</i><u>12</u><u>13</u><i></i></p>
<p><i>Rhian Brewster</i><i>Very Strong</i><i>Squad Player</i><i>Regular Starter</i><i>2</i><i>2</i><i>3</i><i>2</i><i>2</i><i>2</i><i>3</i><i>2</i><i>3</i><i>1</i><i>3</i><i>10</i><i>7</i><u>12</u><s>16</s><u>12</u><u>14</u><i>10</i><u>13</u><i>7</i><i>8</i><u>11</u><u>13</u><i>8</i><u>15</u><i>10</i></p>
<p><i>Tom Davies</i><i>Very Strong</i><i>Squad Player</i><i>Squad Player</i><i>3</i><i>1</i><i>3</i><i>1</i><i>3</i><i>3</i><i>2</i><i>2</i><i>3</i><i>3</i><i>3</i><i>10</i><i>9</i><u>12</u><i>8</i><u>13</u><i>10</i><i>10</i><i>7</i><i>2</i><i>10</i><u>13</u><i>8</i><u>14</u><u>14</u><i>10</i></p>
<p><i>Ben Osborn</i><i>Fairly Strong</i><i>Squad Player</i><i>Regular Starter</i><i>1</i><i>2</i><i>1</i><i>1</i><i>4</i><i>2</i><i>4</i><i>1</i><i>2</i><i>3</i><i>2</i><u>13</u><u>11</u><u>11</u><i>8</i><u>12</u><i>9</i><i>8</i><i>9</i><i>7</i><i>10</i><u>11</u><i>9</i><u>12</u><u>12</u><i>10</i></p>
<p><i>Jack Robinson</i><i>Reasonable</i><i>Squad Player</i><i>Regular Starter</i><i>3</i><i>2</i><i>1</i><i>2</i><i>1</i><i>3</i><i>3</i><i>3</i><i>2</i><i>3</i><i>2</i><u>11</u><i>9</i><i>8</i><i>8</i><u>12</u><i>9</i><u>13</u><i>9</i><s>18</s><u>13</u><u>12</u><i>9</i><u>13</u><u>12</u><i>10</i></p>
<p><i>John Egan</i><i>Very Strong</i><i>Regular Starter</i><i>Regular Starter</i><i>1</i><i>1</i><i>1</i><i>2</i><i>2</i><i>3</i><i>2</i><i>1</i><i>3</i><i>1</i><i>3</i><i>8</i><i>7</i><i>8</i><i>8</i><i>10</i><i>5</i><u>14</u><i>10</i><i>6</i><u>12</u><u>12</u><i>8</i><u>14</u><u>11</u><u>12</u></p>
<p><i></i><i></i><i></i><i></i><i></i><i></i><i></i><i></i><i></i><i></i><i></i><i></i><i></i><i></i><i></i><i></i><i></i><i></i><i></i><i></i><i></i><u></u><i></i><u></u><u></u><u></u><i></i><u></u><u></u><u></u></p>
</div>
<div id="tk"></div><div id="sel"></div><div id="hd"></div>
</body></html>
